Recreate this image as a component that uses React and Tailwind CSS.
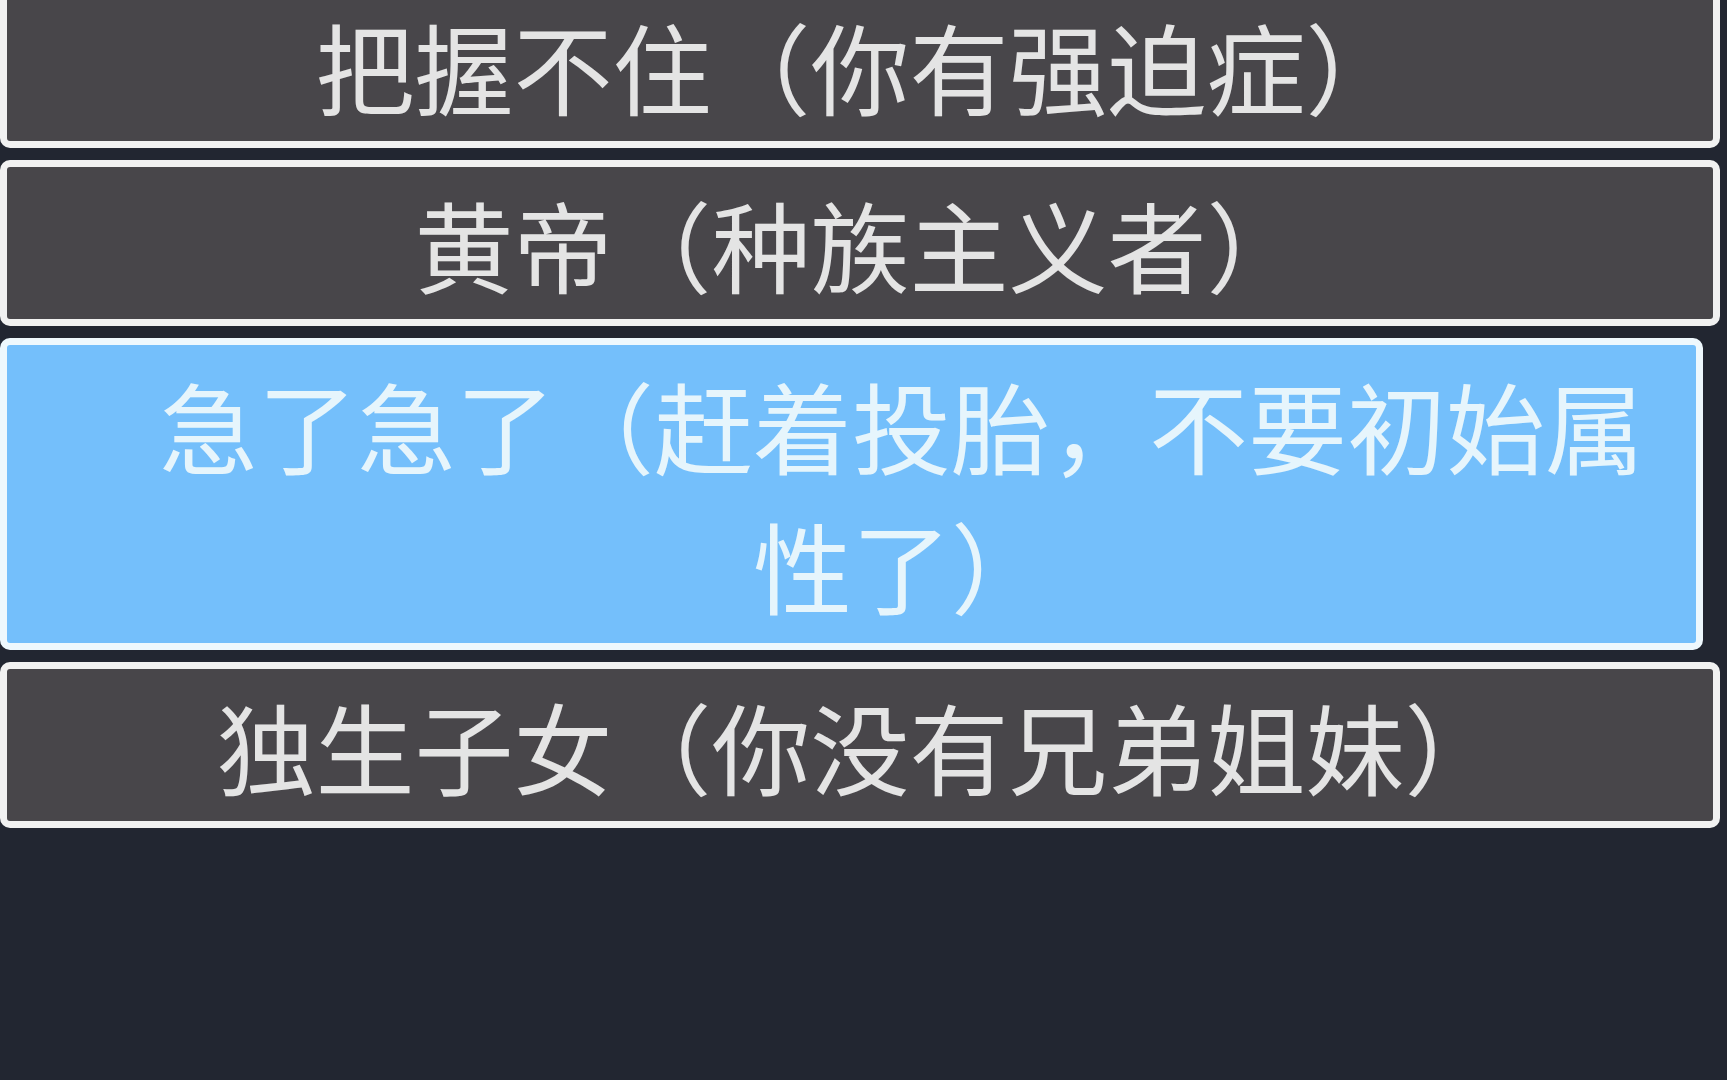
import React from 'react';

const options = [
  { id: 'obsess', label: '把握不住（你有强迫症）' },
  { id: 'racist', label: '黄帝（种族主义者）' },
  { id: 'hurry', label: '急了急了（赶着投胎，不要初始属性了）', selected: true },
  { id: 'only', label: '独生子女（你没有兄弟姐妹）' },
];

function OptionButton({ label, selected }) {
  if (selected) {
    return (
      <button
        type="button"
        className="mr-[24px] rounded-[10px] border-[7px] border-[#eef8fd] bg-[#74bffb] py-[9px] pl-[140px] pr-[40px] text-center text-[99px] font-normal leading-[140px] text-[#e6f5fc]"
      >
        {label}
      </button>
    );
  }

  return (
    <button
      type="button"
      className="mr-[7px] h-[166px] rounded-[10px] border-[7px] border-[#f1f1f1] bg-[#48464a] px-[40px] text-center text-[99px] font-normal leading-[140px] text-[#e4e4e4]"
    >
      {label}
    </button>
  );
}

export default function App() {
  return (
    <div
      className="h-[1080px] w-full overflow-hidden bg-[#222631]"
      style={{ fontFamily: '"Noto Sans CJK SC", "Noto Sans", sans-serif' }}
    >
      <div className="-mt-[18px] flex flex-col gap-[12px]">
        {options.map((opt) => (
          <OptionButton key={opt.id} label={opt.label} selected={opt.selected} />
        ))}
      </div>
    </div>
  );
}
